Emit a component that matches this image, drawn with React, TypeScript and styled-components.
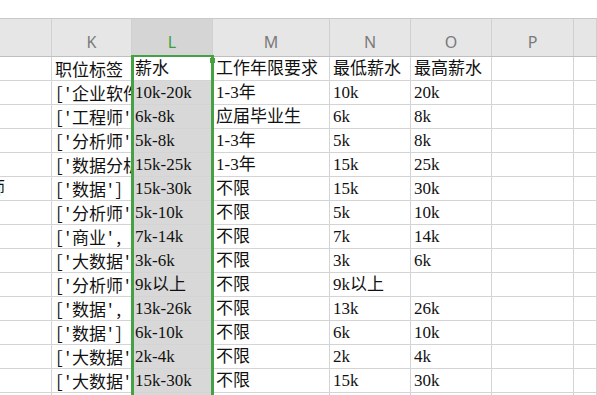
import React from "react";
import styled, { createGlobalStyle } from "styled-components";

const GlobalStyle = createGlobalStyle`
  *, *::before, *::after { box-sizing: border-box; }
  html, body { margin: 0; padding: 0; background: #fff; }
  body { font-family: "Liberation Serif", "Noto Sans CJK SC", serif; }
`;

const COLS = "52px 80px 81px 117px 81px 81px 82px 1fr";
const GREEN = "#44a244";
const GRID = "#d4d4d4";

const Sheet = styled.div`
  position: relative;
  width: 597px;
  height: 395px;
  overflow: hidden;
  background: #fff;
  display: flex;
  flex-direction: column;
`;

const TopStrip = styled.div`
  flex: none;
  height: 19px;
  border-bottom: 1px solid #c9c9c9;
  background: #fff;
`;

const HeaderRow = styled.div`
  flex: none;
  display: grid;
  grid-template-columns: ${COLS};
  height: 38px;
  background: #e6e6e6;
  border-bottom: 1px solid #bfbfbf;
`;

const HeaderCell = styled.div<{ $active?: boolean }>`
  display: flex;
  align-items: center;
  justify-content: center;
  padding-top: 9px;
  border-right: 1px solid #d0d0d0;
  background: ${(p) => (p.$active ? "#d5d5d5" : "transparent")};
  color: ${(p) => (p.$active ? "#3d9e3d" : "#7a7a7a")};
  font-family: "Noto Sans", "Open Sans", sans-serif;
  font-size: 16px;
  font-weight: 400;
`;

const Row = styled.div`
  flex: none;
  display: grid;
  grid-template-columns: ${COLS};
  height: 24px;
  border-bottom: 1px solid ${GRID};
`;

const Cell = styled.div<{ $selected?: boolean }>`
  display: flex;
  align-items: center;
  padding: 0 0 0 3px;
  overflow: hidden;
  white-space: nowrap;
  border-right: 1px solid ${GRID};
  background: ${(p) => (p.$selected ? "#d8d8d8" : "#fff")};
  color: #111;
  font-size: 17px;
  line-height: 23px;
  font-weight: 400;
`;

const TagCell = styled(Cell)`
  font-family: "Noto Sans Mono CJK SC", "Liberation Serif", "Noto Sans CJK SC", monospace;
`;

const OverflowLeftCell = styled(Cell)`
  justify-content: flex-end;
  padding: 0 46px 0 0;
`;

const Clip = styled.span`
  flex: none;
`;

const SelectionFrame = styled.div`
  position: absolute;
  left: 131px;
  top: 55px;
  width: 83px;
  bottom: -4px;
  border: 3px solid ${GREEN};
  border-top-width: 2px;
  pointer-events: none;
`;

const FillHandle = styled.div`
  position: absolute;
  left: 76px;
  top: 1px;
  width: 5px;
  height: 5px;
  background: ${GREEN};
`;

type RowData = {
  j?: string;
  k: string;
  l: string;
  m: string;
  n: string;
  o: string;
};

const rows: RowData[] = [
  { k: "职位标签", l: "薪水", m: "工作年限要求", n: "最低薪水", o: "最高薪水" },
  { k: "['企业软件', '云计算']", l: "10k-20k", m: "1-3年", n: "10k", o: "20k" },
  { k: "['工程师', '数据']", l: "6k-8k", m: "应届毕业生", n: "6k", o: "8k" },
  { k: "['分析师', '数据']", l: "5k-8k", m: "1-3年", n: "5k", o: "8k" },
  { k: "['数据分析', 'SQL']", l: "15k-25k", m: "1-3年", n: "15k", o: "25k" },
  { j: "数据分析师", k: "['数据']", l: "15k-30k", m: "不限", n: "15k", o: "30k" },
  { k: "['分析师', 'BI']", l: "5k-10k", m: "不限", n: "5k", o: "10k" },
  { k: "['商业', '数据']", l: "7k-14k", m: "不限", n: "7k", o: "14k" },
  { k: "['大数据', 'Hadoop']", l: "3k-6k", m: "不限", n: "3k", o: "6k" },
  { k: "['分析师', '数据']", l: "9k以上", m: "不限", n: "9k以上", o: "" },
  { k: "['数据', '分析']", l: "13k-26k", m: "不限", n: "13k", o: "26k" },
  { k: "['数据']", l: "6k-10k", m: "不限", n: "6k", o: "10k" },
  { k: "['大数据', '数据']", l: "2k-4k", m: "不限", n: "2k", o: "4k" },
  { k: "['大数据', 'Spark']", l: "15k-30k", m: "不限", n: "15k", o: "30k" },
  { k: "", l: "", m: "", n: "", o: "" },
];

const letters = ["", "K", "L", "M", "N", "O", "P", ""];

export default function App() {
  return (
    <>
      <GlobalStyle />
      <Sheet>
        <TopStrip />
        <HeaderRow>
          {letters.map((c, i) => (
            <HeaderCell key={i} $active={c === "L"}>
              {c}
            </HeaderCell>
          ))}
        </HeaderRow>
        {rows.map((r, i) => (
          <Row key={i}>
            {r.j ? (
              <OverflowLeftCell>
                <Clip>{r.j}</Clip>
              </OverflowLeftCell>
            ) : (
              <Cell />
            )}
            <TagCell>{r.k}</TagCell>
            <Cell $selected={i > 0}>{r.l}</Cell>
            <Cell>{r.m}</Cell>
            <Cell>{r.n}</Cell>
            <Cell>{r.o}</Cell>
            <Cell />
            <Cell />
          </Row>
        ))}
        <SelectionFrame>
          <FillHandle />
        </SelectionFrame>
      </Sheet>
    </>
  );
}
